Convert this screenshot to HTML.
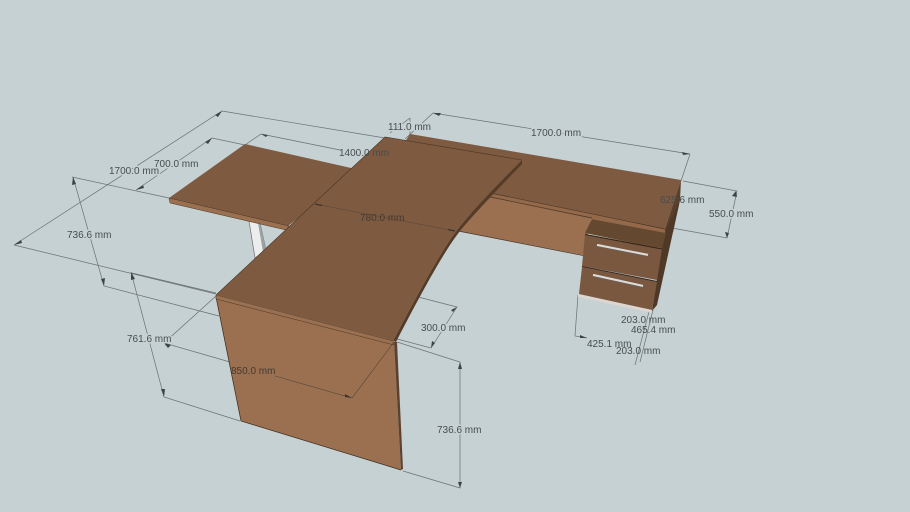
<!DOCTYPE html>
<html><head><meta charset="utf-8"><style>
html,body{margin:0;padding:0;background:#c5d1d3}
svg{display:block;filter:blur(.35px)}
text{font-family:"Liberation Sans",sans-serif;font-size:10px;fill:#474d50}
.h{stroke:#c5d1d3;stroke-width:3;paint-order:stroke;stroke-linejoin:round}
.d{stroke:#6a7072;stroke-width:.7;fill:none}
.e{stroke:#3a2a1c;stroke-width:.7}
.a{fill:#3d4447}
</style></head><body>
<svg width="910" height="512" viewBox="0 0 910 512" xmlns="http://www.w3.org/2000/svg">
<rect width="910" height="512" fill="#c5d1d3"/>
<!-- dimension lines -->
<g class="d">
<path d="M14,245 L222,111 L385,138"/>
<path d="M14,245 L216,294"/>
<path d="M72,177 L169,198"/>
<path d="M136,190 L212,138 L245,145"/>
<path d="M261,134 L340,150 M261,134 L245,145"/>
<path d="M73,177 L104,286 L219,316"/>
<path d="M132,273 L216,293 M131,272 L164,397 L240,421"/>
<path d="M216,296 L164,343 L230,362"/>
<path d="M433,113 L690,154 M433,113 L405,139 M410,118 L410,135 M410,118 L390,133"/>
<path d="M690,154 L681,181 M677,205 L635,365 M653,310 L640,362"/>
<path d="M683,181 L737,191 L727,238 L672,228"/>
<path d="M418,297 L457,307 L431,348 L397,339"/>
<path d="M397,342 L460,362 L460,488 L403,471"/>
<path d="M578,295 L575,336 L587,338"/>
</g>
<!-- white leg -->
<polygon points="249,221 260,223 266,250 255,258" fill="#eceeee" stroke="#6a6e6f" stroke-width=".7"/>
<polygon points="258,223 260,223 266,250 263,252" fill="#9aa2a3"/>
<!-- back desk top -->
<polygon points="410,134 681,180 665,229 491,193 452,232 400,150" fill="#7e5a40"/>
<!-- modesty panel -->
<polygon points="485,195 592,218 583,255 458,231" fill="#9a7050"/>
<polygon points="488,192 665,229 665,233 592,219 488,197" fill="#94694a"/>
<path d="M458,231 L583,255.500" stroke="#4a3626" stroke-width=".7"/>
<path d="M488,192.500 L665,229 M488,196.500 L592,218" stroke="#4a3626" stroke-width=".7"/>
<!-- side of desk / pedestal -->
<polygon points="681,180 665,229 665,234 673,232 680,200" fill="#5a3f2b"/>
<polygon points="680,200 665,232 662,247 652,311 657,305 673,232" fill="#4f3826"/>
<polygon points="592,219 666,233 662,249 585,233" fill="#654830"/>
<polygon points="585,234 662,248 657,280 582,266" fill="#7a583f"/>
<polygon points="582,267 657,282 652,310 579,294" fill="#7a583f"/>
<path d="M585,234.500 L662,249 M582,266.500 L657,281.500" stroke="#33241a" stroke-width="1.1"/>
<polygon points="578,294 652,310 652,313 578,297" fill="#ddd6d0"/>
<path d="M597,245 L648,255" stroke="#dcdcda" stroke-width="2.200"/>
<path d="M593,275 L643,286" stroke="#dcdcda" stroke-width="2.200"/>
<path d="M597,246.300 L648,256.300 M593,276.300 L643,287.300" stroke="#6a6660" stroke-width=".6"/>
<!-- left desk -->
<polygon points="245,144 169,198 288,226 360,170" fill="#7e5a40"/>
<polygon points="169,198 289,226 286,230 170,203" fill="#9a7050" stroke="#4a3626" stroke-width=".5"/>
<!-- panel leg -->
<polygon points="216,297 394,343 401,470 241,421" fill="#9a7050"/>
<path d="M216,297 L241,421 L401,470" class="e" fill="none"/>
<polygon points="394,342 397,342 403,469 401,470" fill="#5d4130"/>
<polygon points="216,295 393,341 394,345 216,299" fill="#9a7050" stroke="#4a3626" stroke-width=".5"/>
<!-- main curved top -->
<path d="M522,160 L522,164 C497,190 473,215 460,231 C449,245 432,272 396,342 L393,341 C430,270 447,243 457,230 C470,213 495,187 522,160 Z" fill="#553c29"/>
<path d="M216,295 L385,137 L522,160 C495,187 470,213 457,230 C447,243 430,270 393,341 Z" fill="#7e5a40"/>
<path d="M216,295 L385,137 L522,160" stroke="#4a3626" stroke-width=".6" fill="none"/>
<path d="M315,204 L455,231" stroke="#54453a" stroke-width=".5"/>
<path d="M315,204 L322,205.500 M448,229.500 L455,231" stroke="#3a3430" stroke-width="1.400"/>
<!-- lines over panel -->
<path d="M275,376 L352,398 L394,342" stroke="#54453a" stroke-width=".6" fill="none"/>
<polygon points="352,398 345,394 345,397" fill="#3a3430"/>
<!-- arrows -->
<g class="a">
<polygon points="222,111 215,115 218,117"/>
<polygon points="14,245 21,240 22,243"/>
<polygon points="212,138 205,142 208,144"/>
<polygon points="136,190 143,185 144,188"/>
<polygon points="73,177 72,185 76,184"/>
<polygon points="104,286 101,279 105,278"/>
<polygon points="131,272 131,280 135,279"/>
<polygon points="164,397 161,389 165,389"/>
<polygon points="164,343 171,345 168,348"/>
<polygon points="433,113 441,113 439,116"/>
<polygon points="690,154 682,152 683,155"/>
<polygon points="736,191 732,196 737,197"/>
<polygon points="727,238 725,232 729,233"/>
<polygon points="457,307 451,310 453,312"/>
<polygon points="431,348 432,341 435,343"/>
<polygon points="460,362 458,369 462,369"/>
<polygon points="460,488 458,482 462,482"/>
<polygon points="587,338 580,335 580,338"/>
<polygon points="261,134 268,135 266,137"/>
</g>
<!-- labels -->
<text class="h" x="109" y="174">1700.0 mm</text>
<text class="h" x="154" y="167">700.0 mm</text>
<text x="339" y="156">1400.0 mm</text>
<text class="h" x="388" y="130">111.0 mm</text>
<text class="h" x="531" y="136">1700.0 mm</text>
<text x="360" y="221" style="fill:#453a32">780.0 mm</text>
<text x="660" y="203">625.6 mm</text>
<text class="h" x="709" y="217">550.0 mm</text>
<text class="h" x="67" y="238">736.6 mm</text>
<text class="h" x="421" y="331">300.0 mm</text>
<text class="h" x="127" y="342">761.6 mm</text>
<text x="231" y="374" style="fill:#453a32">850.0 mm</text>
<text class="h" x="437" y="433">736.6 mm</text>
<text x="621" y="323">203.0 mm</text>
<text x="631" y="333">465.4 mm</text>
<text x="587" y="347">425.1 mm</text>
<text x="616" y="354">203.0 mm</text>
</svg>
</body></html>
